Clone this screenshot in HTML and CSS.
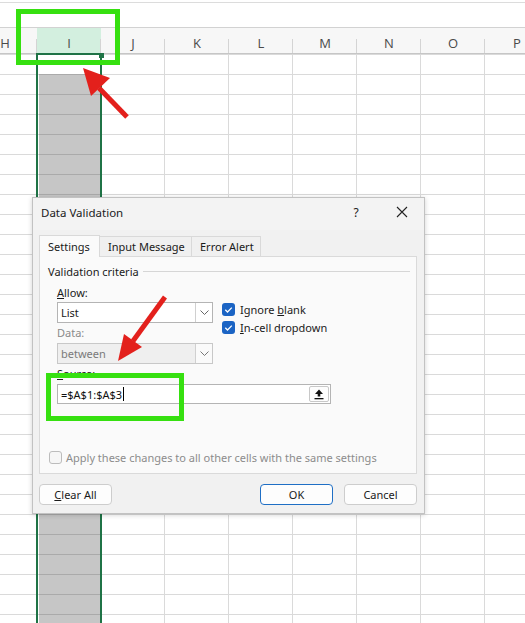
FILE: index.html
```html
<!DOCTYPE html>
<html>
<head>
<meta charset="utf-8">
<title>Data Validation</title>
<link rel="stylesheet" href="styles.css">
</head>
<body>
<div class="sheet">
  <div class="formula-strip"></div>
  <div class="col-headers">
    <div class="ch">H</div>
    <div class="ch sel">I</div>
    <div class="ch">J</div>
    <div class="ch">K</div>
    <div class="ch">L</div>
    <div class="ch">M</div>
    <div class="ch">N</div>
    <div class="ch">O</div>
    <div class="ch">P</div>
  </div>
  <div class="grid">
    <div class="col"></div>
    <div class="col col-sel"><div class="sel-fill"></div></div>
    <div class="col"></div>
    <div class="col"></div>
    <div class="col"></div>
    <div class="col"></div>
    <div class="col"></div>
    <div class="col"></div>
    <div class="col"></div>
  </div>
  <div class="sel-border"></div>
  <div class="fill-handle"></div>
</div>

<div class="dialog">
  <div class="titlebar">
    <span class="title">Data Validation</span>
    <span class="help">?</span>
    <span class="close"><svg width="12" height="12" viewBox="0 0 12 12"><path d="M1 1 L11 11 M11 1 L1 11" stroke="#222" stroke-width="1.1" fill="none"/></svg></span>
  </div>
  <div class="tabs">
    <div class="tab active">Settings</div>
    <div class="tab">Input Message</div>
    <div class="tab">Error Alert</div>
  </div>
  <div class="panel">
    <div class="legend"><span>Validation criteria</span><span class="rule"></span></div>
    <div class="criteria">
      <div class="left">
        <div class="lbl"><u>A</u>llow:</div>
        <div class="select"><span class="sv">List</span><span class="dd"><svg width="9" height="5" viewBox="0 0 9 5"><path d="M0.5 0.5 L4.5 4.5 L8.5 0.5" stroke="#666" stroke-width="1" fill="none"/></svg></span></div>
        <div class="lbl dim">Data:</div>
        <div class="select disabled"><span class="sv">between</span><span class="dd"><svg width="9" height="5" viewBox="0 0 9 5"><path d="M0.5 0.5 L4.5 4.5 L8.5 0.5" stroke="#777" stroke-width="1" fill="none"/></svg></span></div>
      </div>
      <div class="right">
        <div class="chk"><span class="box on"><svg width="13" height="13" viewBox="0 0 13 13"><path d="M3.3 6.8 L5.5 9 L9.8 4.6" stroke="#fff" stroke-width="1.3" fill="none"/></svg></span><span>Ignore <u>b</u>lank</span></div>
        <div class="chk"><span class="box on"><svg width="13" height="13" viewBox="0 0 13 13"><path d="M3.3 6.8 L5.5 9 L9.8 4.6" stroke="#fff" stroke-width="1.3" fill="none"/></svg></span><span><u>I</u>n-cell dropdown</span></div>
      </div>
    </div>
    <div class="lbl src-lbl"><u>S</u>ource:</div>
    <div class="source">
      <span class="val">=$A$1:$A$3</span><span class="caret"></span>
      <span class="upbtn"><svg width="12" height="12" viewBox="0 0 12 12"><path d="M6 1.5 L10 6 L7.3 6 L7.3 8.5 L4.7 8.5 L4.7 6 L2 6 Z" fill="#111"/><rect x="1.5" y="10" width="9" height="1.3" fill="#111"/></svg></span>
    </div>
    <div class="apply"><span class="box off"></span><span>Apply these changes to all other cells with the same settings</span></div>
  </div>
  <div class="footer">
    <button class="btn"><u>C</u>lear All</button>
    <span class="spacer"></span>
    <button class="btn ok">OK</button>
    <button class="btn">Cancel</button>
  </div>
</div>

<div class="hl hl-top"></div>
<div class="hl hl-src"></div>
<svg class="arrows" width="525" height="623" viewBox="0 0 525 623">
  <line x1="127" y1="117" x2="99" y2="88" stroke="#e3201c" stroke-width="5"/>
  <polygon points="83,68 91,96 110,78" fill="#e3201c"/>
  <line x1="165" y1="297" x2="133" y2="341" stroke="#e3201c" stroke-width="5"/>
  <polygon points="118,361 124,334 142,347" fill="#e3201c"/>
</svg>
</body>
</html>
```

FILE: styles.css
```css
html, body {
  margin: 0;
  padding: 0;
}
body {
  width: 525px;
  height: 623px;
  overflow: hidden;
  position: relative;
  background: #fff;
  font-family: "Noto Sans", "Liberation Sans", sans-serif;
  font-size: 11px;
  color: #1a1a1a;
}

/* ---------- sheet ---------- */
.sheet {
  width: 525px;
  height: 623px;
  overflow: hidden;
}
.formula-strip {
  margin-top: 2px;
  height: 25px;
  box-sizing: border-box;
  border-top: 1px solid #dcdcdc;
}
.col-headers {
  display: flex;
  margin-left: -27px;
  height: 27px;
  box-sizing: border-box;
  border-top: 1px solid #d2d2d2;
  border-bottom: 1px solid #c6c6c6;
  background: #f7f7f7;
}
.ch {
  flex: none;
  width: 64px;
  position: relative;
  display: flex;
  align-items: center;
  justify-content: center;
  padding-top: 4px;
  box-sizing: border-box;
  font-family: "Open Sans", "Noto Sans", sans-serif;
  font-size: 13px;
  color: #4a4a4a;
}
.ch::after {
  content: "";
  position: absolute;
  right: 0;
  bottom: 0;
  width: 1px;
  height: 14px;
  background: #d4d4d4;
}
.ch.sel {
  background: #d3efdf;
}
.grid {
  display: flex;
  margin-left: -27px;
  height: 569px;
}
.col {
  flex: none;
  width: 64px;
  box-sizing: border-box;
  border-right: 1px solid #dadada;
  background: repeating-linear-gradient(to bottom, #dadada 0 1px, transparent 1px 20px);
}
.col-sel {
  padding-top: 20px;
}
.sel-fill {
  margin-left: 2px;
  width: 61px;
  height: 549px;
  background: repeating-linear-gradient(to bottom, #aaaaaa 0 1px, #c6c6c6 1px 20px);
}
.sel-border {
  position: absolute;
  left: 36px;
  top: 53px;
  width: 66px;
  height: 600px;
  box-sizing: border-box;
  border: 2px solid #1f7346;
}
.fill-handle {
  position: absolute;
  left: 99px;
  top: 53px;
  width: 5px;
  height: 5px;
  background: #1f7346;
}

/* ---------- dialog ---------- */
.dialog {
  position: absolute;
  left: 32px;
  top: 197px;
  width: 393px;
  height: 317px;
  box-sizing: border-box;
  border: 1px solid #c2c2c2;
  background: #f1f1f1;
  box-shadow: 0 1px 5px rgba(0, 0, 0, 0.18);
  display: flex;
  flex-direction: column;
}
.titlebar {
  height: 28px;
  display: flex;
  align-items: center;
  padding-left: 8px;
  padding-bottom: 4px;
  font-size: 11.5px;
  background: #f3f3f3;
}
.title {
  flex: 1;
}
.help {
  width: 14px;
  text-align: center;
  font-size: 12px;
  margin-right: 33px;
}
.close {
  display: flex;
  margin-right: 16px;
}
.tabs {
  display: flex;
  margin: 5px 0 0 6px;
  height: 21px;
  align-items: flex-end;
}
.tab {
  height: 20px;
  box-sizing: border-box;
  border: 1px solid #d9d9d9;
  border-bottom: none;
  border-left: none;
  background: #f0f0f0;
  display: flex;
  align-items: center;
  padding: 0 0 0 8px;
  white-space: nowrap;
}
.tab.active {
  height: 22px;
  margin-bottom: -1px;
  border-left: 1px solid #d9d9d9;
  background: #fafafa;
  position: relative;
  z-index: 1;
}
.tab:nth-child(1) { width: 61px; }
.tab:nth-child(2) { width: 92px; }
.tab:nth-child(3) { width: 69px; }
.panel {
  margin-left: 6px;
  width: 378px;
  height: 218px;
  box-sizing: border-box;
  border: 1px solid #dadada;
  background: #fafafa;
  padding-left: 17px;
}
.legend {
  display: flex;
  align-items: center;
  margin: 6px 6px 0 -9px;
  height: 16px;
}
.rule {
  flex: 1;
  height: 1px;
  background: #d6d6d6;
  margin-left: 4px;
}
.criteria {
  display: flex;
  gap: 9px;
}
.left {
  width: 156px;
}
.lbl {
  height: 14px;
  margin-top: 7px;
  line-height: 14px;
}
.lbl.dim {
  color: #8a8a8a;
  margin-top: 3px;
}
.select {
  margin-top: 2px;
  height: 21px;
  box-sizing: border-box;
  border: 1px solid #b4b4b4;
  background: #fff;
  display: flex;
  align-items: stretch;
}
.sv {
  flex: 1;
  display: flex;
  align-items: center;
  padding-left: 3px;
}
.dd {
  width: 16px;
  display: flex;
  align-items: center;
  justify-content: center;
  border-left: 1px solid #d0d0d0;
}
.select.disabled {
  margin-top: 3px;
  background: #efefef;
  border-color: #c8c8c8;
  color: #7a7a7a;
}
.select.disabled .dd {
  background: #fafafa;
}
.right {
  padding-top: 24px;
  display: flex;
  flex-direction: column;
  gap: 5px;
}
.chk {
  display: flex;
  align-items: center;
  gap: 5px;
  height: 13px;
}
.box {
  flex: none;
  width: 13px;
  height: 13px;
  box-sizing: border-box;
  border-radius: 3px;
  display: flex;
}
.box.on {
  background: #1b64c4;
}
.box.off {
  border: 1px solid #bcbcbc;
  background: #f6f6f6;
}
.src-lbl {
  margin-top: 3px;
}
.source {
  margin-top: 3px;
  width: 274px;
  height: 20px;
  box-sizing: border-box;
  border: 1px solid #b4b4b4;
  background: #fff;
  display: flex;
  align-items: center;
  padding-left: 3px;
}
.caret {
  width: 1px;
  height: 14px;
  background: #000;
  margin-left: 1px;
}
.val {
  color: #111;
}
.upbtn {
  margin-left: auto;
  margin-right: 1px;
  width: 20px;
  height: 16px;
  box-sizing: border-box;
  border: 1px solid #c8c8c8;
  border-radius: 2px;
  display: flex;
  align-items: center;
  justify-content: center;
  background: #fdfdfd;
}
.apply {
  margin: 46px 0 0 -8px;
  display: flex;
  align-items: center;
  gap: 4px;
  color: #8c8c8c;
}
.footer {
  display: flex;
  margin-top: 10px;
  padding: 0 7px 0 6px;
  gap: 11px;
}
.spacer {
  flex: 1;
}
.btn {
  width: 73px;
  height: 21px;
  box-sizing: border-box;
  border: 1px solid #cdcdcd;
  border-radius: 4px;
  background: #fdfdfd;
  font-family: inherit;
  font-size: 11px;
  color: #1a1a1a;
  padding: 0;
}
.btn.ok {
  border-color: #1f6fc5;
}

/* ---------- annotations ---------- */
.hl {
  position: absolute;
  box-sizing: border-box;
  border: 5px solid #36e010;
}
.hl-top {
  left: 16px;
  top: 9px;
  width: 104px;
  height: 56px;
}
.hl-src {
  left: 46px;
  top: 373px;
  width: 138px;
  height: 48px;
}
.arrows {
  position: absolute;
  left: 0;
  top: 0;
  pointer-events: none;
}
```
